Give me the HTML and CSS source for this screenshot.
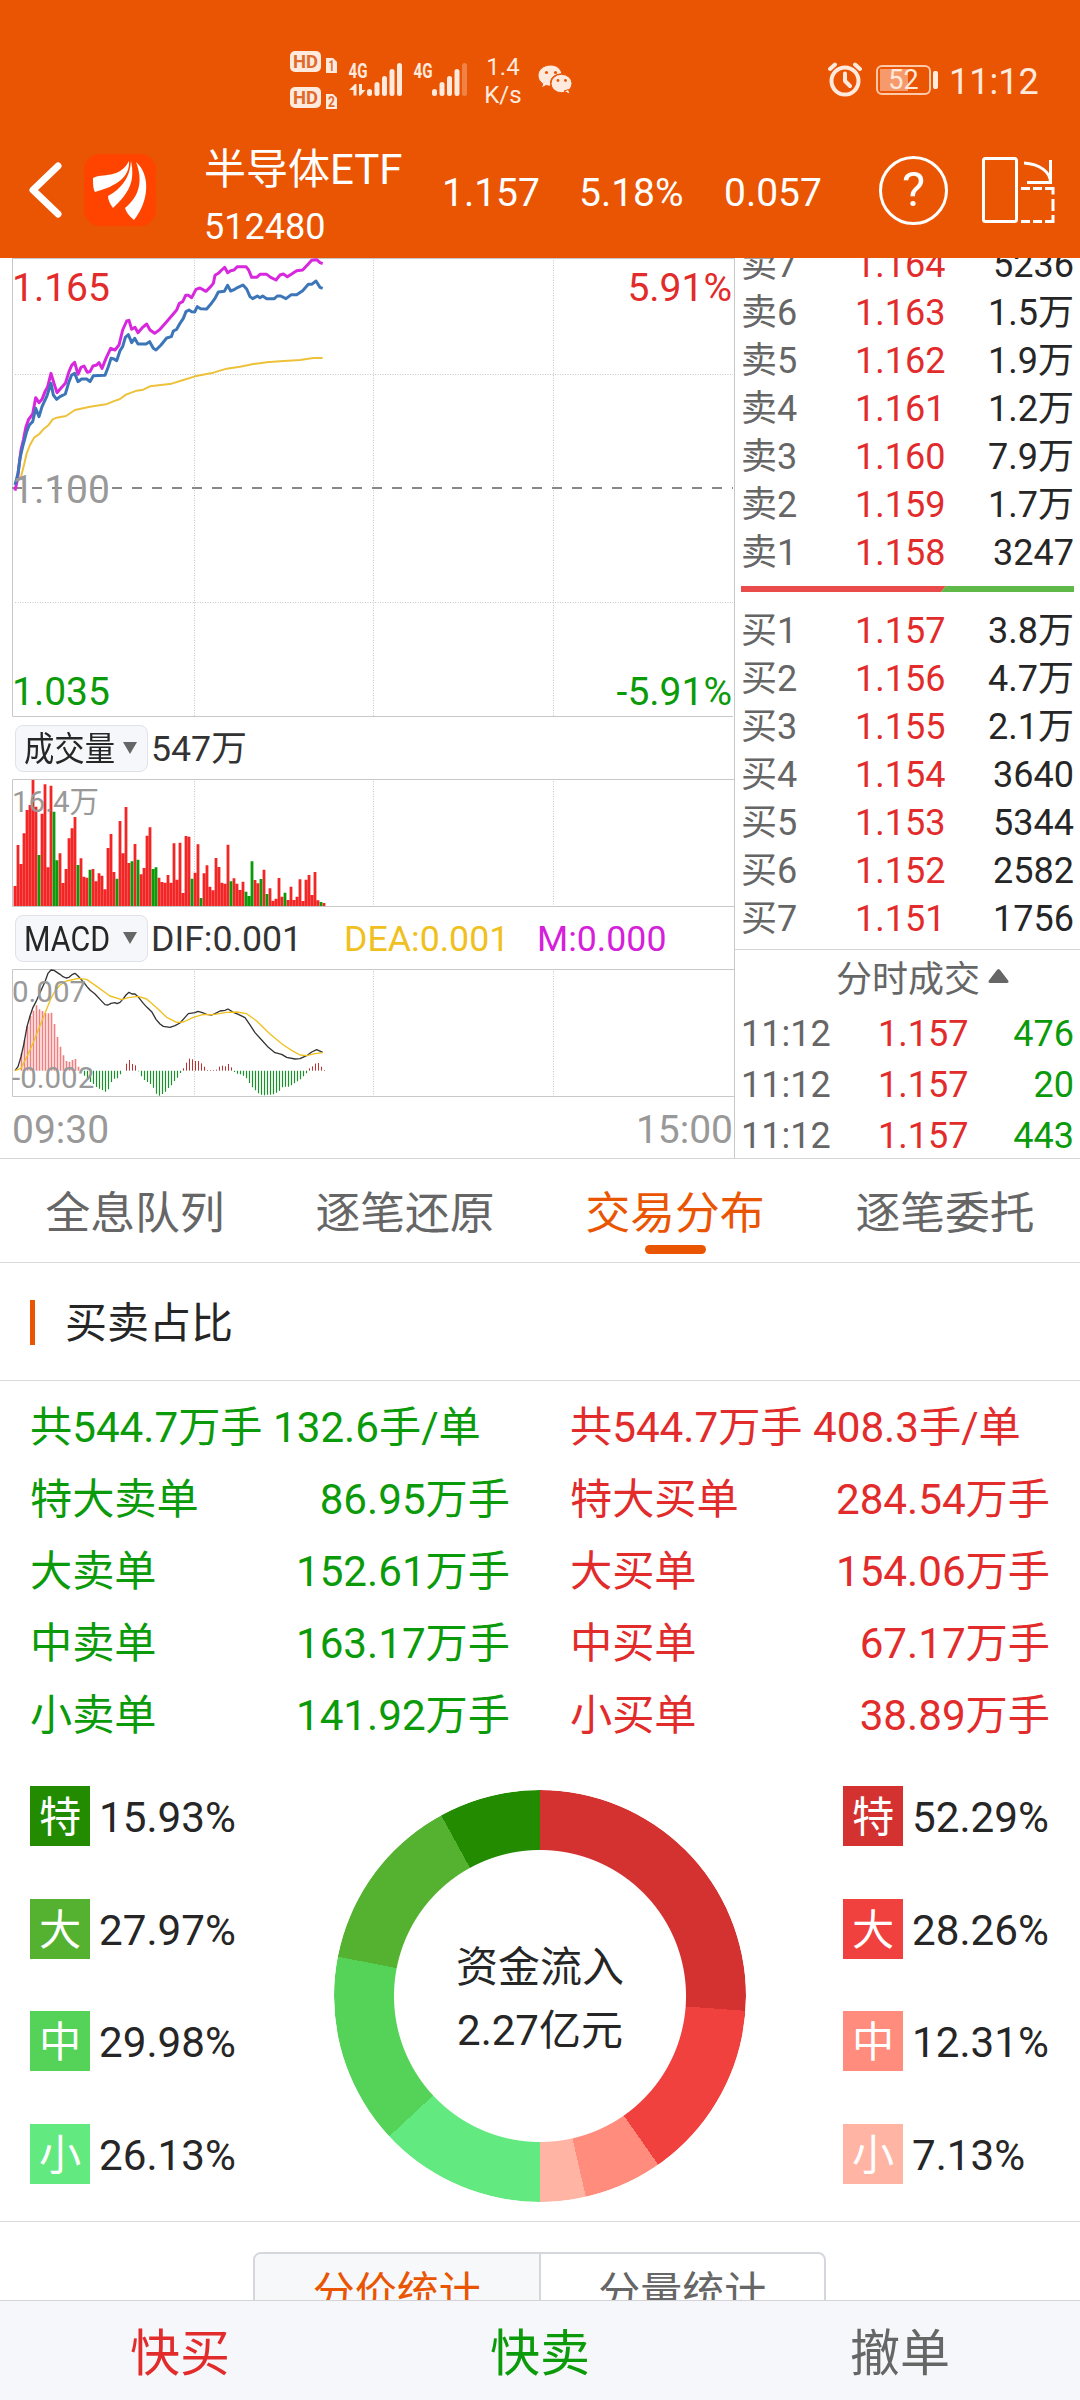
FILE: index.html
```html
<!DOCTYPE html>
<html lang="zh-CN">
<head>
<meta charset="utf-8">
<title>半导体ETF 512480</title>
<link rel="stylesheet" href="styles.css">
</head>
<body>
<div class="app">
  <header class="header">
    <div class="status">
      <svg class="status-signal" width="190" height="64" viewBox="285 48 190 64">
        <g class="sig-fill">
          <rect x="290" y="51" width="31" height="21" rx="5"/>
          <rect x="290" y="87" width="31" height="21" rx="5"/>
          <path d="M326 58h7l4 4v11h-11zM326 94h7l4 4v11h-11z"/>
          <rect x="367" y="89" width="5" height="7" rx="2.5"/>
          <rect x="374.500" y="82" width="5" height="14" rx="2.500"/>
          <rect x="382" y="76" width="5" height="20" rx="2.500"/>
          <rect x="389.500" y="69" width="5" height="27" rx="2.500"/>
          <rect x="397" y="63" width="5" height="33" rx="2.500"/>
          <rect x="432" y="89" width="5" height="7" rx="2.500"/>
          <rect x="439.500" y="82" width="5" height="14" rx="2.500"/>
          <rect x="447" y="76" width="5" height="20" rx="2.500"/>
          <rect x="454.500" y="69" width="5" height="27" rx="2.500"/>
          <rect x="462" y="63" width="5" height="33" rx="2.500" opacity=".3"/>
          <path d="M349 90l6-6h1.500v11.500h-3v-5.500zM359 84h3v6h3.500l-5 5.500h-1.500z"/>
        </g>
        <g class="sig-cut">
          <text x="293" y="68" font-size="19" textLength="25" lengthAdjust="spacingAndGlyphs">HD</text>
          <text x="293" y="104" font-size="19" textLength="25" lengthAdjust="spacingAndGlyphs">HD</text>
          <text x="328.500" y="71" font-size="14" textLength="6" lengthAdjust="spacingAndGlyphs">1</text>
          <text x="328" y="107" font-size="14" textLength="7" lengthAdjust="spacingAndGlyphs">2</text>
        </g>
        <g class="sig-text">
          <text x="348.500" y="78" font-size="20" textLength="19" lengthAdjust="spacingAndGlyphs">4G</text>
          <text x="413.500" y="78" font-size="20" textLength="19" lengthAdjust="spacingAndGlyphs">4G</text>
        </g>
      </svg>
      <div class="status-speed"><span>1.4</span><span>K/s</span></div>
      <svg class="status-wechat" width="36" height="32" viewBox="0 0 36 32">
        <path class="fill" d="M13 1C5.500 1 0 5.800 0 11.500c0 3.400 1.900 6.300 4.700 8.200L3.500 24l4.600-2.500c1.500.5 3 .7 4.900.6C11 15.500 15 10 24 9.800 22.800 4.600 18.500 1 13 1z"/>
        <ellipse class="fill" cx="23.500" cy="19.500" rx="10.500" ry="9.200"/>
        <path class="fill" d="M26 27l6 3.500-1.500-5z"/>
        <g class="dots"><circle cx="8.500" cy="8.500" r="1.600"/><circle cx="17.500" cy="8.500" r="1.600"/><circle cx="20" cy="16.500" r="1.400"/><circle cx="27.500" cy="16.500" r="1.400"/></g>
      </svg>
      <svg class="status-alarm" width="34" height="35" viewBox="0 0 34 35">
        <circle cx="17" cy="19" r="13.500"/><path d="M17 11.500v7.500l5 5M2 7l5-4.500M32 7l-5-4.500"/>
      </svg>
      <div class="battery"><span>52</span></div>
      <div class="battery-nub"></div>
      <div class="clock">11:12</div>
    </div>
    <div class="titlebar">
      <svg class="back" width="36" height="60" viewBox="0 0 36 60"><path d="M31 6L6 30l25 24"/></svg>
      <svg class="logo" width="72" height="72" viewBox="0 0 72 72">
        <rect width="72" height="72" rx="16"/>
        <path d="M9 24c9-5 27 1 36-17 1 16-12 25-34 31-2-3-2-9-2-14zM47 7c4 20-1 31-18 47-3-4-5-8-5-12 13-7 22-18 23-35zM52 8c14 12 14 38-2 58-5-4-8-8-9-12 15-12 18-28 11-46z"/>
      </svg>
      <div class="names"><div class="name">半导体ETF</div><div class="code">512480</div></div>
      <div class="quote price-now">1.157</div>
      <div class="quote change-rate">5.18%</div>
      <div class="quote change">0.057</div>
      <div class="help">?</div>
      <svg class="rotate" width="74" height="68" viewBox="981 156 74 68">
        <rect x="983.500" y="158.500" width="33" height="63" rx="2"/>
        <path d="M1024 163c16 1 26 9 26.500 19M1050.500 160v22.500H1027"/>
        <path d="M1021 188.500h9M1033 188.500h9M1045 188.500h8v6M1053 199v12M1053 215v6.500h-8M1042 221.500h-9M1030 221.500h-9"/>
      </svg>
    </div>
  </header>

  <main class="market">
    <section class="charts">
      <div class="chart price">
        <svg width="734" height="459" viewBox="0 258 734 459">
          <g class="frame"><path d="M12.500 258V716.500H733M12 258.500H734"/></g>
          <g class="grid"><path d="M194.500 260V716M373.500 260V716M553.500 260V716M15 374.500H733M15 602.500H733"/></g>
          <path class="mid" d="M12 488H733"/>
          <g transform="translate(0 250) scale(.33333)" class="lines">
            <polyline class="avg" points="45,700 63,680 72,645 80,610 90,585 103,562 118,552 130,538 145,526 158,508 170,503 198,498 225,480 270,470 318,463 340,454 360,447 378,434 410,422 430,419 450,409 515,401 550,390 585,379 640,368 680,356 720,350 760,342 800,337 840,334 900,330 940,324 968,324"/>
            <polyline class="index" points="45,722 52,690 58,640 63,600 70,570 78,530 86,508 98,492 107,443 117,458 126,448 135,425 143,410 153,370 162,400 171,428 180,418 196,400 207,365 215,346 224,337 234,373 243,352 252,348 262,367 270,365 279,348 290,345 297,338 306,355 318,325 332,295 345,300 357,285 368,240 380,213 387,211 395,238 405,232 414,248 428,232 440,222 450,240 464,250 480,238 500,215 530,180 538,160 548,155 557,136 565,136 575,143 588,118 600,114 618,124 632,110 640,100 645,76 655,70 665,60 674,52 683,68 692,62 702,60 712,50 738,50 746,60 755,82 770,82 780,73 800,73 812,82 828,90 840,75 850,72 862,80 875,72 890,62 908,60 925,42 935,31 950,29 960,38 968,41"/>
            <polyline class="last" points="45,705 54,670 60,625 68,590 80,545 88,525 98,515 107,475 117,500 126,470 140,440 153,400 160,435 170,448 180,440 196,432 207,395 215,375 224,370 234,395 245,387 260,387 270,395 280,377 315,376 325,350 333,325 342,327 350,332 360,302 368,290 376,262 385,254 395,278 404,265 414,282 438,282 449,275 460,295 468,300 483,285 500,264 514,260 520,243 530,238 540,220 550,205 558,185 567,180 575,185 584,186 592,170 602,176 620,177 632,163 645,145 655,126 673,124 683,106 692,123 704,118 714,112 729,105 740,117 750,140 758,146 772,138 780,143 788,138 800,146 823,146 832,138 842,138 858,146 874,134 890,134 908,122 925,103 935,103 948,93 960,112 968,115"/>
          </g>
        </svg>
        <span class="tag tl red">1.165</span><span class="tag tr red">5.91%</span>
        <span class="tag ml gray">1.100</span>
        <span class="tag bl green">1.035</span><span class="tag br green">-5.91%</span>
      </div>
      <div class="indicator">
        <div class="picker"><span>成交量</span><i></i></div>
        <span class="dark">547万</span>
      </div>
      <div class="chart sub">
        <svg width="734" height="128" viewBox="0 779 734 128">
          <g class="frame"><path d="M734 779.500H12.500V906.500H734"/></g>
          <g class="grid"><path d="M194.500 781V906M373.500 781V906M553.500 781V906"/></g>
          <g transform="translate(0 710) scale(.33333)"><path id="vol-up" class="vol-up"/><path id="vol-down" class="vol-down"/></g>
        </svg>
        <span class="scale top">16.4万</span>
      </div>
      <div class="indicator">
        <div class="picker"><span>MACD</span><i></i></div>
        <span class="dark dif">DIF:0.001</span><span class="yellow dea">DEA:0.001</span><span class="magenta">M:0.000</span>
      </div>
      <div class="chart sub">
        <svg width="734" height="128" viewBox="0 969 734 128">
          <g class="frame"><path d="M734 969.500H12.500V1096.500H734"/></g>
          <g class="grid"><path d="M194.500 971V1096M373.500 971V1096M553.500 971V1096"/></g>
          <g transform="translate(0 910) scale(.33333)" class="lines">
            <g transform="translate(1.5 0)"><path id="macd-strong" class="macd-strong"/><path id="macd-up" class="macd-up"/><path id="macd-down" class="macd-down"/></g>
            <polyline class="dif-line" points="45,482 54,470 63,440 72,400 81,350 90,318 99,292 108,275 117,255 126,235 135,215 144,190 153,180 162,181 171,187 180,193 189,200 198,204 207,202 216,194 225,190 234,198 243,208 252,218 261,230 270,240 285,252 300,268 315,284 324,285 333,280 345,278 351,281 360,277 370,266 378,255 387,247 396,252 405,252 414,260 430,280 441,292 455,305 468,328 480,342 490,349 510,352 525,347 540,339 555,322 565,311 585,308 594,304 605,307 620,313 635,315 645,311 660,303 675,301 684,297 700,307 715,313 735,323 750,345 765,368 785,390 805,412 825,428 845,433 860,442 885,447 900,446 920,437 935,426 950,419 968,427"/>
            <polyline class="dea-line" points="45,482 63,475 81,440 99,400 117,355 135,310 153,265 165,243 180,225 200,213 235,205 260,208 290,229 330,258 365,269 385,263 415,259 440,267 470,293 500,322 530,337 550,336 580,322 610,313 640,314 680,307 710,306 740,311 770,333 810,372 850,405 880,424 900,435 920,437 945,431 968,428"/>
          </g>
        </svg>
        <span class="scale top">0.007</span><span class="scale bottom">-0.002</span>
      </div>
      <div class="times"><span>09:30</span><span>15:00</span></div>
    </section>

    <aside class="side">
      <div class="book">
        <div class="row"><span>卖7</span><b>1.164</b><em>5236</em></div>
        <div class="row"><span>卖6</span><b>1.163</b><em>1.5万</em></div>
        <div class="row"><span>卖5</span><b>1.162</b><em>1.9万</em></div>
        <div class="row"><span>卖4</span><b>1.161</b><em>1.2万</em></div>
        <div class="row"><span>卖3</span><b>1.160</b><em>7.9万</em></div>
        <div class="row"><span>卖2</span><b>1.159</b><em>1.7万</em></div>
        <div class="row"><span>卖1</span><b>1.158</b><em>3247</em></div>
        <svg class="ratio" width="333" height="6" viewBox="0 0 333 6"><path fill="#e84b4a" d="M0 0H205L200 6H0z"/><path fill="#5fb948" d="M205 0H333V6H200z"/></svg>
        <div class="row"><span>买1</span><b>1.157</b><em>3.8万</em></div>
        <div class="row"><span>买2</span><b>1.156</b><em>4.7万</em></div>
        <div class="row"><span>买3</span><b>1.155</b><em>2.1万</em></div>
        <div class="row"><span>买4</span><b>1.154</b><em>3640</em></div>
        <div class="row"><span>买5</span><b>1.153</b><em>5344</em></div>
        <div class="row"><span>买6</span><b>1.152</b><em>2582</em></div>
        <div class="row"><span>买7</span><b>1.151</b><em>1756</em></div>
      </div>
      <div class="trades">
        <div class="trades-title">分时成交<svg width="21" height="14" viewBox="0 0 21 14"><path d="M10.500 0Q11.500 0 12.500 1.500L20.500 12Q21 14 19 14H2Q0 14 .5 12L8.500 1.500Q9.500 0 10.500 0z"/></svg></div>
        <div class="trade"><span>11:12</span><b>1.157</b><em>476</em></div>
        <div class="trade"><span>11:12</span><b>1.157</b><em>20</em></div>
        <div class="trade"><span>11:12</span><b>1.157</b><em>443</em></div>
      </div>
    </aside>
  </main>

  <nav class="tabs">
    <a>全息队列</a><a>逐笔还原</a><a class="active">交易分布</a><a>逐笔委托</a>
  </nav>
  <h2 class="section-title">买卖占比</h2>

  <section class="orders">
    <div class="side-orders green">
      <div class="total">共544.7万手 132.6手/单</div>
      <div class="order"><span>特大卖单</span><span>86.95万手</span></div>
      <div class="order"><span>大卖单</span><span>152.61万手</span></div>
      <div class="order"><span>中卖单</span><span>163.17万手</span></div>
      <div class="order"><span>小卖单</span><span>141.92万手</span></div>
    </div>
    <div class="side-orders red">
      <div class="total">共544.7万手 408.3手/单</div>
      <div class="order"><span>特大买单</span><span>284.54万手</span></div>
      <div class="order"><span>大买单</span><span>154.06万手</span></div>
      <div class="order"><span>中买单</span><span>67.17万手</span></div>
      <div class="order"><span>小买单</span><span>38.89万手</span></div>
    </div>
  </section>

  <section class="distribution">
    <ul class="legend">
      <li><i class="s1">特</i>15.93%</li><li><i class="s2">大</i>27.97%</li><li><i class="s3">中</i>29.98%</li><li><i class="s4">小</i>26.13%</li>
    </ul>
    <div class="donut">
      <div class="ring"></div>
      <div class="donut-label"><span>资金流入</span><span>2.27亿元</span></div>
    </div>
    <ul class="legend">
      <li><i class="b1">特</i>52.29%</li><li><i class="b2">大</i>28.26%</li><li><i class="b3">中</i>12.31%</li><li><i class="b4">小</i>7.13%</li>
    </ul>
  </section>

  <section class="stats">
    <div class="segmented"><a class="on">分价统计</a><a>分量统计</a></div>
  </section>

  <footer class="actions"><a class="red">快买</a><a class="green">快卖</a><a>撤单</a></footer>
</div>
<script src="charts.js"></script>
</body>
</html>
```

FILE: styles.css
```css
* { box-sizing: border-box; }
body { margin: 0; background: #fff; font-family: Roboto, "Noto Sans CJK SC", sans-serif; color: #262626; white-space: nowrap; }
ul { list-style: none; margin: 0; padding: 0; }
i, em { font-style: normal; }
b, h2 { font-weight: 400; margin: 0; }
svg { display: block; flex: none; }
.red { color: #e22b2b; }
.green { color: #0a9a0a; }
.gray { color: #999; }
.dark { color: #333; }
.yellow { color: #f0c020; }
.magenta { color: #d61fdb; }

.app { width: 1080px; height: 2400px; overflow: hidden; display: flex; flex-direction: column; }

/* Header */
.header { height: 258px; flex: none; background: #ea5504; color: #fff; }
.status { height: 128px; padding-top: 48px; display: flex; align-items: flex-start; color: #ffeadd; }
.status-signal { margin-left: 285px; }
.sig-fill { fill: #ffeadd; }
.sig-cut { fill: #e0692c; font-weight: 700; }
.sig-text { fill: #ffeadd; font-weight: 700; }
.status-speed { width: 56px; display: flex; flex-direction: column; align-items: center; font-size: 24px; line-height: 28px; padding-top: 5px; }
.status-wechat { margin: 16px 0 0 7px; }
.status-wechat .fill { fill: #ffeadd; stroke: #ea5504; stroke-width: 1; }
.status-wechat .dots { fill: #ea5504; }
.status-alarm { margin: 14px 0 0 254px; fill: none; stroke: #ffeadd; stroke-width: 4; stroke-linecap: round; stroke-linejoin: round; }
.battery { width: 55px; height: 30px; margin: 17px 0 0 14px; border: 2px solid #ffc9a8; border-radius: 6px; background: linear-gradient(#f69a6b, #f69a6b) 2px 2px / 28px 22px no-repeat; font-size: 27px; line-height: 27px; text-align: center; }
.battery-nub { width: 5px; height: 18px; margin: 23px 0 0 2px; border-radius: 2px; background: #ffeadd; }
.clock { margin: 13px 0 0 11px; font-size: 36px; line-height: 42px; }
.titlebar { display: flex; align-items: flex-start; height: 130px; }
.back { margin: 32px 0 0 27px; fill: none; stroke: #fff; stroke-width: 7; stroke-linecap: round; stroke-linejoin: round; }
.logo { margin: 26px 0 0 21px; }
.logo rect { fill: #ff4400; }
.logo path { fill: #fff; }
.names { width: 286px; padding: 16px 0 0 48px; }
.name { font-size: 42px; line-height: 52px; }
.code { font-size: 36px; line-height: 62px; }
.quote { padding-top: 41px; font-size: 39px; line-height: 48px; }
.price-now { width: 137px; }
.change-rate { width: 145px; }
.change { width: 155px; }
.help { width: 69px; height: 69px; margin: 28px 0 0 0; border: 3px solid #fff; border-radius: 50%; font-size: 49px; line-height: 62px; text-align: center; }
.rotate { margin: 28px 0 0 33px; fill: none; stroke: #fff; stroke-width: 3; }

/* Charts and order book */
.market { display: flex; height: 901px; flex: none; border-bottom: 1px solid #d4d4d4; }
.charts { width: 734px; }
.chart { position: relative; }
.price { height: 459px; }
.sub { height: 128px; }
.frame { fill: none; stroke: #c8c8c8; }
.grid { fill: none; stroke: #c8c8c8; stroke-dasharray: 1 1.5; }
.mid { fill: none; stroke: #888; stroke-width: 2; stroke-dasharray: 10 10; }
.lines { fill: none; stroke-linejoin: round; }
.avg { stroke: #edc23a; stroke-width: 6; }
.index { stroke: #d828de; stroke-width: 9; }
.last { stroke: #3c76b8; stroke-width: 9; }
.tag { position: absolute; font-size: 39px; line-height: 46px; }
.tl { left: 12px; top: 7px; }
.tr { right: 2px; top: 7px; }
.ml { left: 12px; top: 209px; }
.bl { left: 12px; top: 411px; }
.br { right: 2px; top: 411px; }
.scale { position: absolute; left: 12px; font-size: 29.500px; line-height: 34px; color: #999; }
.scale.top { top: 6px; }
.scale.bottom { bottom: 2px; }
.indicator { height: 62px; display: flex; align-items: center; padding-left: 15px; font-size: 35.700px; line-height: 46px; }
.indicator > span { padding-top: 2px; }
.picker { width: 133px; height: 47px; margin-right: 3px; padding-left: 8px; display: flex; align-items: center; border: 1px solid #dfe2e8; border-radius: 8px; background: #f6f7fa; font-size: 34.500px; }
.picker span { width: 99px; padding-top: 2px; transform: scaleX(.88); transform-origin: left; }
.picker span:only-of-type { flex: none; }
.picker i { border: 7px solid transparent; border-top: 12px solid #666; border-bottom: 0; }
.dif { width: 193px; }
.dea { width: 193px; }
.vol-up { stroke: #f32626; stroke-width: 8.400; }
.vol-down { stroke: #0a9a0a; stroke-width: 8.400; }
.macd-strong { stroke: #f08080; stroke-width: 5; }
.macd-up { stroke: #b83030; stroke-width: 3; }
.macd-down { stroke: #169428; stroke-width: 3.500; }
.dif-line { stroke: #333; stroke-width: 4; }
.dea-line { stroke: #f0c020; stroke-width: 4; }
.times { display: flex; justify-content: space-between; padding: 9px 1px 0 12px; font-size: 39px; line-height: 48px; color: #999; }

.side { flex: 1; border-left: 1px solid #c8c8c8; overflow: hidden; font-size: 36px; }
.side span { color: #666; }
.side b { color: #e22b2b; }
.book { height: 692px; padding: 0 6px; border-bottom: 1px solid #d4d4d4; overflow: hidden; }
.row { display: grid; grid-template-columns: 114px 1fr auto; height: 48px; line-height: 48px; }
.row:first-child { margin-top: -17px; }
.ratio { margin: 9px 0 15px; }
.trades { padding: 1px 6px 0; }
.trades-title { display: flex; align-items: center; justify-content: flex-start; padding-left: 95px; gap: 8px; height: 58px; line-height: 60px; color: #666; }
.trades-title svg { fill: #666; margin-top: -9px; }
.trade { display: grid; grid-template-columns: 137px 1fr auto; height: 51px; line-height: 51px; }
.trade em { color: #0a9a0a; }

/* Tabs and title */
.tabs { display: flex; height: 104px; flex: none; border-bottom: 1px solid #d9d9d9; }
.tabs a { flex: 1; display: flex; flex-direction: column; align-items: center; font-size: 44.800px; line-height: 86px; padding-top: 12px; height: 104px; color: #666; }
.tabs .active { color: #ea5504; }
.tabs .active::after { content: ""; width: 61px; height: 9px; margin-top: -12px; border-radius: 5px; background: #ea5504; }
.section-title { height: 118px; flex: none; display: flex; align-items: center; padding-left: 30px; border-bottom: 1px solid #d9d9d9; font-size: 42px; line-height: 118px; padding-top: 4px; }
.section-title::before { content: ""; width: 5px; height: 45px; margin: -2px 30px 0 0; background: #ea5504; }

.orders { display: flex; height: 369px; flex: none; padding-top: 11px; font-size: 42.200px; line-height: 72px; }
.side-orders { width: 540px; padding: 0 30px; }
.order { display: flex; justify-content: space-between; }

.distribution { display: flex; justify-content: space-between; height: 472px; flex: none; padding: 36px 30px 0; border-bottom: 1px solid #d9d9d9; }
.legend { width: 207px; display: flex; flex-direction: column; gap: 52.700px; font-size: 42.200px; line-height: 63px; }
.legend li { display: flex; height: 60px; gap: 9px; }
.legend i { width: 60px; text-align: center; color: #fff; }
.s1 { background: #228b00; } .s2 { background: #54b230; } .s3 { background: #55d258; } .s4 { background: #62e980; }
.b1 { background: #d33230; } .b2 { background: #f0413f; } .b3 { background: #ff8c7c; } .b4 { background: #ffb4a4; }
.donut { width: 412px; height: 412px; margin-top: 4px; display: grid; }
.donut > * { grid-area: 1 / 1; }
.ring {
  border-radius: 50%;
  background: conic-gradient(#d33230 94.12deg, #f0413f 0 144.99deg, #ff8c7c 0 167.15deg, #ffb4a4 0 180deg, #62e980 0 227.03deg, #55d258 0 281deg, #54b230 0 331.33deg, #228b00 0);
  mask: radial-gradient(circle, transparent 145.500px, #000 146.500px);
}
.donut-label { display: flex; flex-direction: column; align-items: center; justify-content: center; font-size: 42px; line-height: 63px; padding-top: 6px; }

.stats { height: 78px; flex: none; padding: 30px 254px 0 253px; overflow: hidden; }
.segmented { display: flex; height: 84px; border: 2px solid #d4d8dd; border-radius: 8px; overflow: hidden; }
.segmented a { flex: 1; text-align: center; font-size: 42px; line-height: 78px; color: #666; }
.segmented .on { background: #f6f8fa; color: #ea5504; border-right: 2px solid #d4d8dd; }

.actions { height: 100px; flex: none; display: flex; background: #f5f7fa; border-top: 1px solid #d4d4d8; font-size: 50px; line-height: 106px; color: #666; }
.actions a { flex: 1; text-align: center; }
```

FILE: charts.js
```js
// One entry per minute from 09:30; a minute is 9 units wide.
var STEP = 9, START = 45;

// Top of each volume bar, and the minutes that closed down.
var volume = [528,405,462,370,300,285,210,290,435,311,223,472,227,305,451,430,519,477,385,355,321,465,445,500,503,479,477,514,490,497,538,414,372,486,506,333,430,291,459,454,402,449,493,474,377,352,477,472,503,516,518,495,518,400,509,398,549,378,380,506,488,403,564,490,466,530,541,444,471,518,521,404,514,505,521,540,515,545,558,454,510,520,507,479,552,535,572,566,504,560,548,570,530,570,560,508,573,509,495,555,486,571,576,579];
var down = [8,13,14,21,25,34,39,41,46,47,59,62,72,77,78,79,82,84,90,102];

// End of each MACD bar.
var macd = [482,482,430,391,348,318,302,286,298,303,308,310,308,342,381,410,436,453,455,450,447,470,482,497,510,516,522,531,536,540,545,538,516,506,505,493,482,461,450,462,466,484,499,510,516,522,533,551,557,552,545,534,526,513,503,489,475,458,446,448,453,453,460,470,480,480,480,479,470,467,469,462,472,486,491,493,497,505,519,532,541,550,554,556,554,554,553,548,542,532,530,530,526,520,514,508,499,490,475,469,461,459,470,480];

function bars(values, base, keep) {
  return values.map(function (v, i) {
    return v !== base && keep(v, i) ? 'M' + (START + i * STEP) + ' ' + base + 'V' + v : '';
  }).join('');
}
function draw(id, d) { document.getElementById(id).setAttribute('d', d); }

draw('vol-up', bars(volume, 588, function (v, i) { return down.indexOf(i) < 0; }));
draw('vol-down', bars(volume, 588, function (v, i) { return down.indexOf(i) >= 0; }));
draw('macd-strong', bars(macd, 482, function (v, i) { return v < 482 && i < 22; }));
draw('macd-up', bars(macd, 482, function (v, i) { return v < 482 && i >= 22; }));
draw('macd-down', bars(macd, 482, function (v) { return v > 482; }));
```
